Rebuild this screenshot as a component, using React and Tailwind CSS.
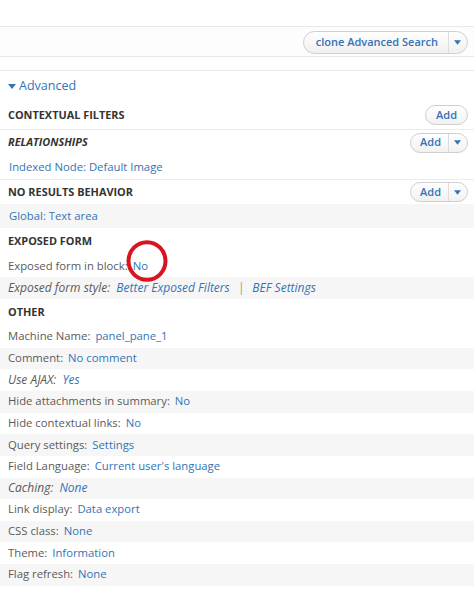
import React from 'react';

const LINK = 'text-[#3474b4]';

function Caret({ className = '' }) {
  return (
    <svg viewBox="0 0 8 5" className={className}>
      <path d="M0 0 L8 0 L4 5 Z" fill="currentColor" />
    </svg>
  );
}

function AddButton({ split }) {
  return (
    <div className="flex h-[20px] items-stretch rounded-full border border-[#cfcfcf] bg-gradient-to-b from-white to-[#f1f1f1] text-[11px] font-semibold text-[#3474b4]">
      <span className={split ? 'flex items-center pl-[9px] pr-[7px]' : 'flex items-center px-[10px]'}>Add</span>
      {split && (
        <span className="flex items-center border-l border-[#dcdcdc] pl-[5px] pr-[6px]">
          <Caret className="w-[7px] h-[5px]" />
        </span>
      )}
    </div>
  );
}

function Header({ children, italic, h, button, border = true }) {
  return (
    <div className={`flex items-center justify-between pl-[8px] pr-[6px] ${h} ${border ? 'border-t border-[#ececec]' : ''}`}>
      <span className={`text-[10.9px] font-bold text-[#333] ${italic ? 'italic' : ''}`}>{children}</span>
      {button}
    </div>
  );
}

function Row({ label, value, gray, italic, extra }) {
  return (
    <div className={`flex h-[21.64px] items-center pl-[8px] ${italic ? 'italic text-[12px]' : 'text-[11.3px]'} ${gray ? 'bg-[#f6f6f6]' : 'bg-white'}`}>
      <span className="text-[#5a5a5a]">{label}:</span>
      <span className={`${italic ? 'ml-[6px]' : 'ml-[5px]'} ${LINK}`}>{value}</span>
      {extra}
    </div>
  );
}

const other = [
  ['Machine Name', 'panel_pane_1', false, false],
  ['Comment', 'No comment', true, false],
  ['Use AJAX', 'Yes', false, true],
  ['Hide attachments in summary', 'No', true, false],
  ['Hide contextual links', 'No', false, false],
  ['Query settings', 'Settings', true, false],
  ['Field Language', "Current user's language", false, false],
  ['Caching', 'None', true, true],
  ['Link display', 'Data export', false, false],
  ['CSS class', 'None', true, false],
  ['Theme', 'Information', false, false],
  ['Flag refresh', 'None', true, false],
];

export default function App() {
  return (
    <div className="relative w-[474px] h-[601px] overflow-hidden bg-white" style={{ fontFamily: '"Open Sans", "DejaVu Sans", sans-serif' }}>
      {/* top blank */}
      <div className="h-[27px] border-b border-[#e8e8e8]" />

      {/* clone button band */}
      <div className="flex h-[30px] items-center justify-end border-b border-[#e8e8e8] bg-[#fdfdfd] pr-[6px] pt-[2px]">
        <div className="flex h-[23px] items-stretch rounded-full border border-[#cfcfcf] bg-gradient-to-b from-white to-[#f0f0f0] text-[11px] font-semibold text-[#3474b4]">
          <span className="flex items-center pl-[12px] pr-[10px]">clone Advanced Search</span>
          <span className="flex items-center border-l border-[#dcdcdc] pl-[5px] pr-[6px]">
            <Caret className="w-[7px] h-[5px]" />
          </span>
        </div>
      </div>

      <div className="h-[14px] border-b border-[#e8e8e8]" />

      {/* Advanced toggle */}
      <div className={`flex h-[30px] items-center pl-[8px] text-[12.5px] ${LINK}`}>
        <Caret className="mr-[3px] w-[8px] h-[5px]" />
        <span>Advanced</span>
      </div>

      <Header h="h-[28px]" border={false} button={<AddButton />}>CONTEXTUAL FILTERS</Header>

      <Header h="h-[26px]" italic button={<AddButton split />}>RELATIONSHIPS</Header>
      <div className={`flex h-[24px] items-center pl-[9px] text-[11.3px] ${LINK}`}>Indexed Node: Default Image</div>

      <Header h="h-[25px]" button={<AddButton split />}>NO RESULTS BEHAVIOR</Header>
      <div className={`flex h-[24px] items-center bg-[#f6f6f6] pl-[9px] text-[11.3px] ${LINK}`}>Global: Text area</div>

      <Header h="h-[27px]" border={false}>EXPOSED FORM</Header>
      <div className="flex h-[22px] items-center pl-[8px] text-[11.3px]">
        <span className="text-[#5a5a5a]">Exposed form in block:</span>
        <span className={`ml-[5px] ${LINK}`}>No</span>
      </div>
      <Row
        label="Exposed form style"
        value="Better Exposed Filters"
        gray
        italic
        extra={
          <>
            <span className="mx-[8px] text-[#999]">|</span>
            <span className={LINK}>BEF Settings</span>
          </>
        }
      />

      <Header h="h-[27.5px]" border={false}>OTHER</Header>
      {other.map(([l, v, g, i]) => (
        <Row key={l} label={l} value={v} gray={g} italic={i} />
      ))}

      {/* red annotation circle */}
      <svg className="absolute left-[126px] top-[240px] w-[42px] h-[42px]" viewBox="0 0 42 42">
        <ellipse cx="21" cy="21" rx="18.5" ry="18.8" fill="none" stroke="#d8141e" strokeWidth="4" />
      </svg>
    </div>
  );
}
